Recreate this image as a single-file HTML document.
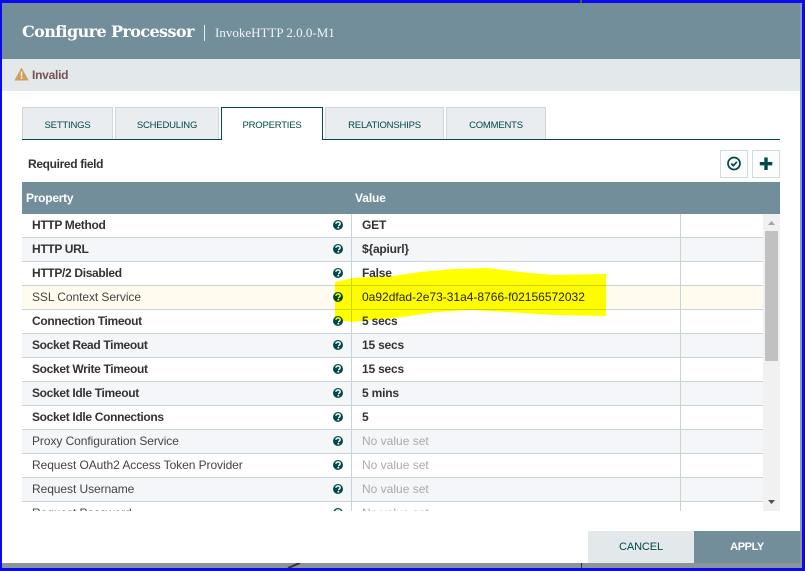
<!DOCTYPE html>
<html><head><meta charset="utf-8">
<style>
html,body{margin:0;padding:0;width:805px;height:571px;overflow:hidden;background:#0a0aee;}
*{box-sizing:border-box;}
body{font-family:"Liberation Sans",sans-serif;position:relative;}
.a{position:absolute;}
#bg{left:2px;top:3px;width:800px;height:565px;background:#8a9499;}
#strip{left:800px;top:3px;width:2px;height:528px;background:#8c98c8;}
#dlg{left:2px;top:3px;width:798px;height:560px;background:#fff;overflow:hidden;}
#hd{left:2px;top:3px;width:798px;height:56px;background:#728e9b;}
#inv{left:2px;top:59px;width:798px;height:32px;background:#e3e8eb;}
.tab{position:absolute;top:107px;height:32px;background:#e9edef;border:1px solid #d0d7db;border-bottom:0;font-size:9.5px;letter-spacing:-.2px;color:#004849;text-align:center;line-height:35px;}
.tab.on{background:#fff;border:1px solid #004849;border-bottom:0;height:33px;z-index:3;line-height:35px;}
.btn{position:absolute;top:150px;width:28px;height:28px;background:#fbfcfc;border:1px solid #d0dadf;}
.r{position:absolute;left:22px;width:741px;height:24px;border-bottom:1px solid #c8d3d8;font-size:12px;color:#262626;}
.r.e{background:#f4f6f7;}
.r.y{background:#fffcef;}
.r b,.r span.n{position:absolute;left:10px;top:4px;line-height:15px;white-space:nowrap;}
.r b{color:#333;letter-spacing:-.33px;}
.r span.n{color:#444;letter-spacing:-.07px;}
.r i{position:absolute;left:340px;top:4px;font-style:normal;line-height:15px;color:#262626;white-space:nowrap;}
.r i.g{color:#aaa;font-weight:normal;}
.r i.bd{font-weight:bold;letter-spacing:-.2px;color:#333;}
.r svg{position:absolute;left:310px;top:5px;}
</style></head><body>
<div class="a" id="bg"></div>
<div class="a" id="strip"></div>
<div class="a" style="left:580px;top:0;width:2px;height:3px;background:#555"></div>
<div class="a" style="left:581px;top:563px;width:1px;height:5px;background:#333"></div>
<svg class="a" style="left:285px;top:563px" width="20" height="5"><path d="M3 5L15 0" stroke="#333" stroke-width="2"/></svg>
<div class="a" id="dlg"></div>
<div class="a" id="hd"></div>
<div class="a" style="left:22px;top:21px;font-family:'DejaVu Serif',serif;font-weight:bold;font-size:16px;letter-spacing:-.6px;line-height:22px;color:#fff;white-space:nowrap">Configure Processor</div>
<div class="a" style="left:204px;top:25px;width:1px;height:16px;background:#e6ecef"></div>
<div class="a" style="left:215px;top:25px;font-family:'Liberation Serif',serif;font-size:13px;line-height:16px;color:#f2f5f6;white-space:nowrap">InvokeHTTP 2.0.0-M1</div>
<div class="a" id="inv"></div>
<svg class="a" style="left:14px;top:67px" width="15" height="14" viewBox="0 0 15 14"><path d="M7.5 0.5L14.7 13.5H0.3Z" fill="#cf9f5d"/><path d="M6.8 4.5h1.4v5h-1.4zM6.8 10.3h1.4v1.6h-1.4z" fill="#fff"/></svg>
<div class="a" style="left:32px;top:68px;font-size:12px;font-weight:bold;letter-spacing:-.25px;line-height:15px;color:#775351">Invalid</div>

<div class="a" style="left:22px;top:139px;width:758px;height:1px;background:#004849"></div>
<div class="tab" style="left:22px;width:91px">SETTINGS</div>
<div class="tab" style="left:115px;width:104px">SCHEDULING</div>
<div class="tab on" style="left:221px;width:102px">PROPERTIES</div>
<div class="tab" style="left:325px;width:119px">RELATIONSHIPS</div>
<div class="tab" style="left:446px;width:100px">COMMENTS</div>

<div class="a" style="left:28px;top:157px;font-size:12px;font-weight:bold;letter-spacing:-.35px;line-height:15px;color:#333">Required field</div>
<div class="btn" style="left:720px"><svg width="26" height="26" viewBox="0 0 26 26" style="display:block"><circle cx="13" cy="12.500" r="6" fill="none" stroke="#004849" stroke-width="1.700"/><path d="M10.200 12.500l2.100 2.100 3.600-3.800" fill="none" stroke="#004849" stroke-width="1.700"/></svg></div>
<div class="btn" style="left:752px"><svg width="26" height="26" viewBox="0 0 26 26" style="display:block"><path d="M13 6.500v12.500M6.800 12.700h12.500" stroke="#004849" stroke-width="3.400"/></svg></div>

<div class="a" style="left:22px;top:182px;width:758px;height:32px;background:#728e9b;color:#fff;font-size:12px;font-weight:bold;line-height:32px">
<span class="a" style="left:4px;top:0;letter-spacing:-.25px">Property</span><span class="a" style="left:333px;top:0;letter-spacing:-.1px">Value</span></div>

<div class="a" style="left:0;top:0;width:805px;height:571px;">
<div class="r" style="top:214px"><b>HTTP Method</b><svg width="12" height="12"><use href="#q"/></svg><i class="bd">GET</i></div>
<div class="r e" style="top:238px"><b>HTTP URL</b><svg width="12" height="12"><use href="#q"/></svg><i class="bd">${apiurl}</i></div>
<div class="r" style="top:262px"><b>HTTP/2 Disabled</b><svg width="12" height="12"><use href="#q"/></svg><i class="bd">False</i></div>
<div class="r y" style="top:286px"><span class="n">SSL Context Service</span><svg width="12" height="12"><use href="#q"/></svg><i>0a92dfad-2e73-31a4-8766-f02156572032</i></div>
<div class="r" style="top:310px"><b>Connection Timeout</b><svg width="12" height="12"><use href="#q"/></svg><i class="bd">5 secs</i></div>
<div class="r e" style="top:334px"><b>Socket Read Timeout</b><svg width="12" height="12"><use href="#q"/></svg><i class="bd">15 secs</i></div>
<div class="r" style="top:358px"><b>Socket Write Timeout</b><svg width="12" height="12"><use href="#q"/></svg><i class="bd">15 secs</i></div>
<div class="r e" style="top:382px"><b>Socket Idle Timeout</b><svg width="12" height="12"><use href="#q"/></svg><i class="bd">5 mins</i></div>
<div class="r" style="top:406px"><b>Socket Idle Connections</b><svg width="12" height="12"><use href="#q"/></svg><i class="bd">5</i></div>
<div class="r e" style="top:430px"><span class="n">Proxy Configuration Service</span><svg width="12" height="12"><use href="#q"/></svg><i class="g">No value set</i></div>
<div class="r" style="top:454px"><span class="n">Request OAuth2 Access Token Provider</span><svg width="12" height="12"><use href="#q"/></svg><i class="g">No value set</i></div>
<div class="r e" style="top:478px"><span class="n">Request Username</span><svg width="12" height="12"><use href="#q"/></svg><i class="g">No value set</i></div>
<div class="r" style="top:502px;border:0"><span class="n">Request Password</span><svg width="12" height="12"><use href="#q"/></svg><i class="g">No value set</i></div>
</div>
<div class="a" style="left:2px;top:511px;width:778px;height:20px;background:#fff"></div>
<div class="a" style="left:351px;top:214px;width:1px;height:297px;background:#c8d3d8"></div>
<div class="a" style="left:680px;top:214px;width:1px;height:297px;background:#c8d3d8"></div>

<div class="a" style="left:763px;top:214px;width:17px;height:297px;background:#f1f1f1"></div>
<div class="a" style="left:765px;top:231px;width:13px;height:130px;background:#c1c1c1"></div>
<svg class="a" style="left:763px;top:214px" width="17" height="297"><path d="M5 11L8.500 7L12 11Z" fill="#a3a3a3"/><path d="M5 286H12L8.500 290Z" fill="#505050"/></svg>

<svg class="a" style="left:0;top:0;mix-blend-mode:multiply" width="805" height="571"><path d="M335 282L353 278L393 276L420 272L453 269L487 268L520 272L553 275L606 274V316L553 315L507 312L470 310L437 312L403 317L353 322L335 320Z" fill="#ffff00"/></svg>

<div class="a" style="left:588px;top:531px;width:106px;height:32px;background:#e3e8eb;color:#004849;font-size:11px;letter-spacing:-.1px;text-align:center;line-height:32px">CANCEL</div>
<div class="a" style="left:694px;top:531px;width:106px;height:32px;background:#728e9b;color:#fff;font-size:11px;font-weight:bold;letter-spacing:-.4px;text-align:center;line-height:32px">APPLY</div>

<svg width="0" height="0" style="position:absolute"><defs><g id="q"><circle cx="6" cy="6" r="5" fill="#004849"/><path d="M3.900 4.800C4 3.500 5 3 6.100 3C7.300 3 8.200 3.700 8.200 4.700C8.200 6.100 6.500 6 6.500 7.200" fill="none" stroke="#fff" stroke-width="1.400"/><rect x="5.500" y="8" width="1.700" height="1.500" fill="#fff"/></g></defs></svg>
</body></html>
